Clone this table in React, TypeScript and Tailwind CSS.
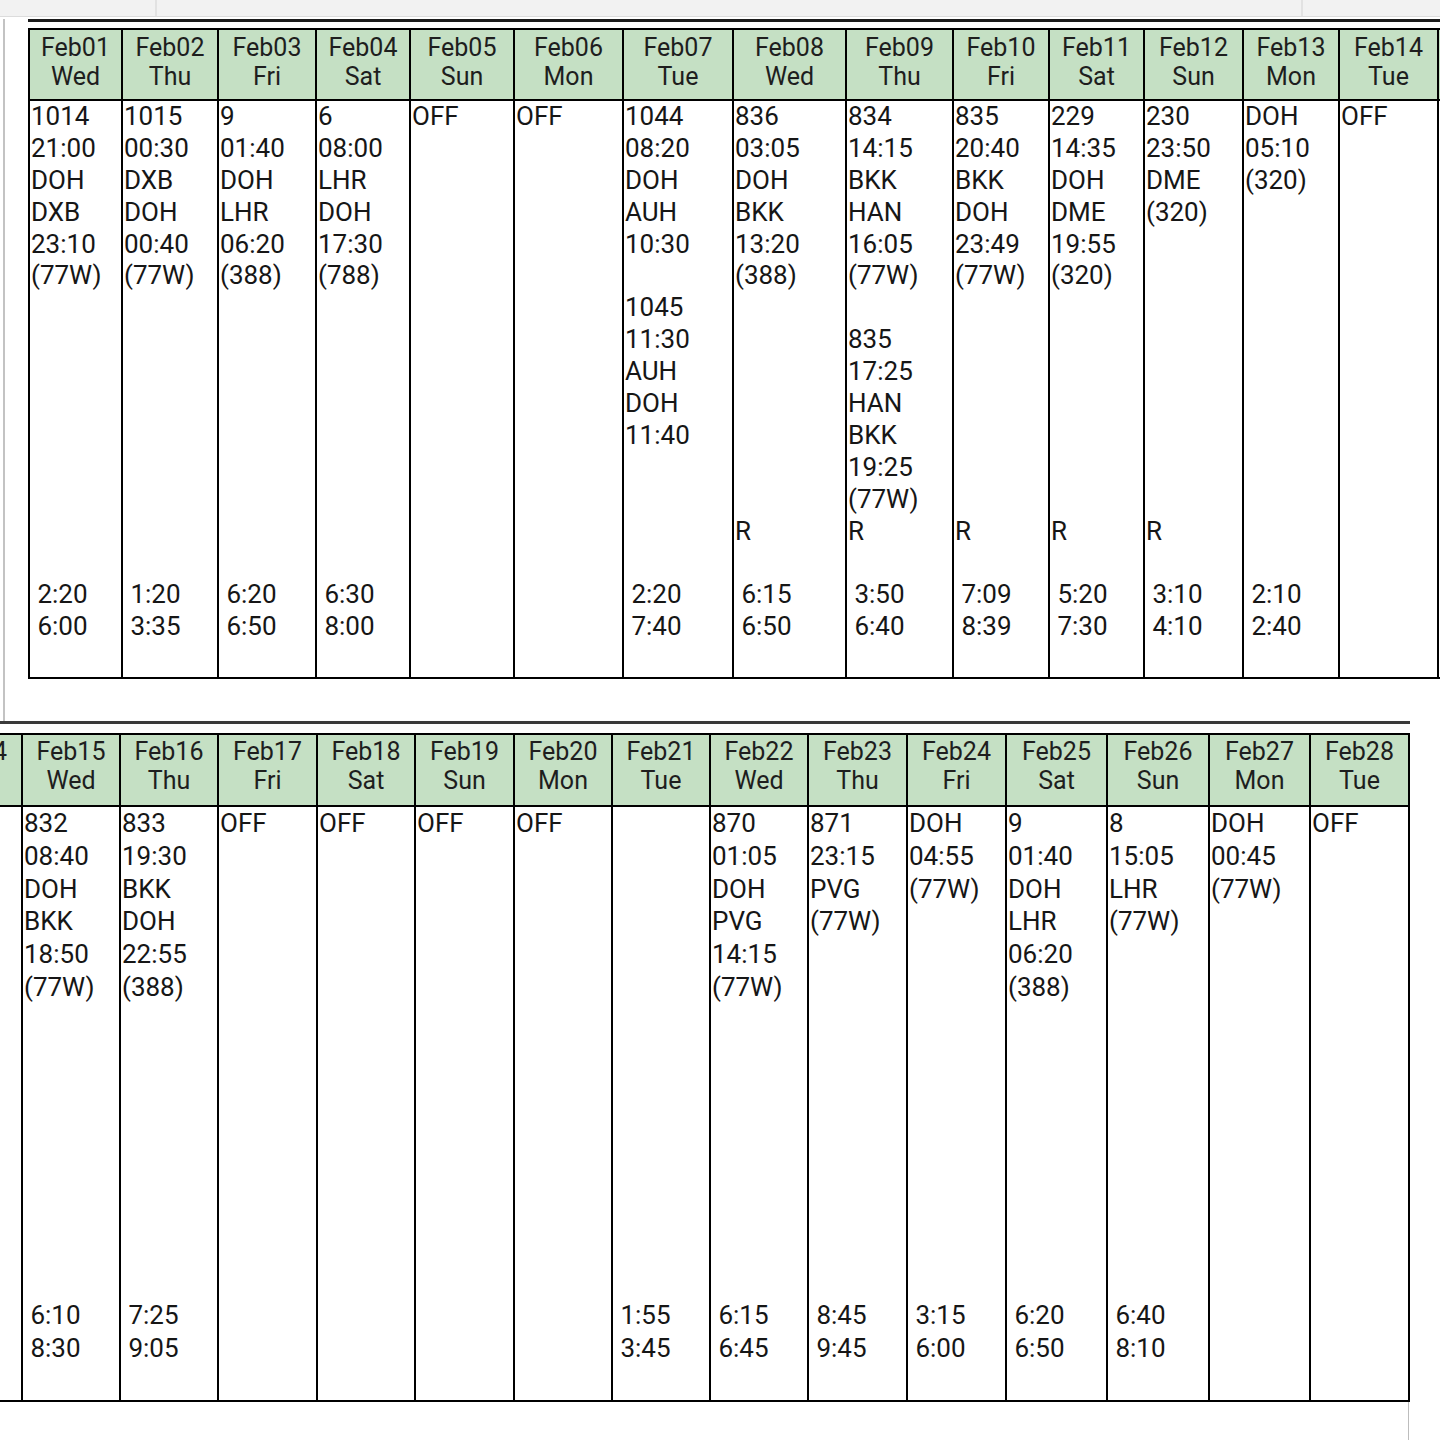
import React from 'react'

type Day = {
  d: string
  w: string
  lines: string[]
  r?: boolean
  dur?: [string, string]
  width: string
}

const topDays: Day[] = [
  { d: 'Feb01', w: 'Wed', width: 'w-[93px]', lines: ['1014', '21:00', 'DOH', 'DXB', '23:10', '(77W)'], dur: ['2:20', '6:00'] },
  { d: 'Feb02', w: 'Thu', width: 'w-[96px]', lines: ['1015', '00:30', 'DXB', 'DOH', '00:40', '(77W)'], dur: ['1:20', '3:35'] },
  { d: 'Feb03', w: 'Fri', width: 'w-[98px]', lines: ['9', '01:40', 'DOH', 'LHR', '06:20', '(388)'], dur: ['6:20', '6:50'] },
  { d: 'Feb04', w: 'Sat', width: 'w-[94px]', lines: ['6', '08:00', 'LHR', 'DOH', '17:30', '(788)'], dur: ['6:30', '8:00'] },
  { d: 'Feb05', w: 'Sun', width: 'w-[104px]', lines: ['OFF'] },
  { d: 'Feb06', w: 'Mon', width: 'w-[109px]', lines: ['OFF'] },
  {
    d: 'Feb07', w: 'Tue', width: 'w-[110px]',
    lines: ['1044', '08:20', 'DOH', 'AUH', '10:30', '', '1045', '11:30', 'AUH', 'DOH', '11:40'],
    dur: ['2:20', '7:40']
  },
  { d: 'Feb08', w: 'Wed', width: 'w-[113px]', lines: ['836', '03:05', 'DOH', 'BKK', '13:20', '(388)'], r: true, dur: ['6:15', '6:50'] },
  {
    d: 'Feb09', w: 'Thu', width: 'w-[107px]',
    lines: ['834', '14:15', 'BKK', 'HAN', '16:05', '(77W)', '', '835', '17:25', 'HAN', 'BKK', '19:25', '(77W)'],
    r: true, dur: ['3:50', '6:40']
  },
  { d: 'Feb10', w: 'Fri', width: 'w-[96px]', lines: ['835', '20:40', 'BKK', 'DOH', '23:49', '(77W)'], r: true, dur: ['7:09', '8:39'] },
  { d: 'Feb11', w: 'Sat', width: 'w-[95px]', lines: ['229', '14:35', 'DOH', 'DME', '19:55', '(320)'], r: true, dur: ['5:20', '7:30'] },
  { d: 'Feb12', w: 'Sun', width: 'w-[99px]', lines: ['230', '23:50', 'DME', '(320)'], r: true, dur: ['3:10', '4:10'] },
  { d: 'Feb13', w: 'Mon', width: 'w-[96px]', lines: ['DOH', '05:10', '(320)'], dur: ['2:10', '2:40'] },
  { d: 'Feb14', w: 'Tue', width: 'w-[99px]', lines: ['OFF'] },
  { d: 'Feb15', w: 'Wed', width: 'w-[100px]', lines: ['832', '08:40', 'DOH', 'BKK', '18:50', '(77W)'], dur: ['6:10', '8:30'] }
]

const bottomDays: Day[] = [
  { d: 'Feb14', w: 'Tue', width: 'w-[99px]', lines: ['OFF'] },
  { d: 'Feb15', w: 'Wed', width: 'w-[98px]', lines: ['832', '08:40', 'DOH', 'BKK', '18:50', '(77W)'], dur: ['6:10', '8:30'] },
  { d: 'Feb16', w: 'Thu', width: 'w-[98px]', lines: ['833', '19:30', 'BKK', 'DOH', '22:55', '(388)'], dur: ['7:25', '9:05'] },
  { d: 'Feb17', w: 'Fri', width: 'w-[99px]', lines: ['OFF'] },
  { d: 'Feb18', w: 'Sat', width: 'w-[98px]', lines: ['OFF'] },
  { d: 'Feb19', w: 'Sun', width: 'w-[99px]', lines: ['OFF'] },
  { d: 'Feb20', w: 'Mon', width: 'w-[98px]', lines: ['OFF'] },
  { d: 'Feb21', w: 'Tue', width: 'w-[98px]', lines: [], dur: ['1:55', '3:45'] },
  { d: 'Feb22', w: 'Wed', width: 'w-[98px]', lines: ['870', '01:05', 'DOH', 'PVG', '14:15', '(77W)'], dur: ['6:15', '6:45'] },
  { d: 'Feb23', w: 'Thu', width: 'w-[99px]', lines: ['871', '23:15', 'PVG', '(77W)'], dur: ['8:45', '9:45'] },
  { d: 'Feb24', w: 'Fri', width: 'w-[99px]', lines: ['DOH', '04:55', '(77W)'], dur: ['3:15', '6:00'] },
  { d: 'Feb25', w: 'Sat', width: 'w-[101px]', lines: ['9', '01:40', 'DOH', 'LHR', '06:20', '(388)'], dur: ['6:20', '6:50'] },
  { d: 'Feb26', w: 'Sun', width: 'w-[102px]', lines: ['8', '15:05', 'LHR', '(77W)'], dur: ['6:40', '8:10'] },
  { d: 'Feb27', w: 'Mon', width: 'w-[101px]', lines: ['DOH', '00:45', '(77W)'] },
  { d: 'Feb28', w: 'Tue', width: 'w-[99px]', lines: ['OFF'] }
]

// 17 text rows per cell: 13 for legs, one for R, a blank, then the two totals
const cellLines = (day: Day) => {
  const rows = [...day.lines]
  while (rows.length < 13) rows.push('')
  rows.push(day.r ? 'R' : '')
  rows.push('')
  rows.push(day.dur ? ' ' + day.dur[0] : '')
  rows.push(day.dur ? ' ' + day.dur[1] : '')
  return rows
}

type Sizing = {
  head: string
  body: string
  row: string
}

const topSize: Sizing = {
  head: 'h-[71px] pt-[3px]',
  body: 'h-[576px]',
  row: 'h-[31.9px] leading-[31.9px]'
}

const bottomSize: Sizing = {
  head: 'h-[72px] pt-[2px]',
  body: 'h-[593px]',
  row: 'h-[32.8px] leading-[32.8px]'
}

const Column = ({ day, size }: { day: Day; size: Sizing }) => (
  <div className={`${day.width} shrink-0 flex flex-col border-r-2 border-black`}>
    <div className={`${size.head} bg-[#c5e0c4] border-b-2 border-black text-center text-[25px] leading-[29px] text-[#1e1e1e]`}>
      <div>{day.d}</div>
      <div>{day.w}</div>
    </div>
    <div className={`${size.body} pl-[1px] text-[26px] text-[#161616]`}>
      {cellLines(day).map((l, i) => (
        <div key={i} className={`${size.row} whitespace-pre`}>
          {l}
        </div>
      ))}
    </div>
  </div>
)

const Schedule = ({ days, size }: { days: Day[]; size: Sizing }) => (
  <div className="flex w-max border-y-2 border-l-2 border-black bg-white">
    {days.map((day) => (
      <Column key={day.d} day={day} size={size} />
    ))}
  </div>
)

export default function App() {
  return (
    <div className="w-[1440px] h-[1440px] overflow-hidden bg-white font-['Roboto','Liberation_Sans',sans-serif] flex flex-col">
      {/* toolbar strip */}
      <div className="h-[17px] shrink-0 flex bg-[#f2f2f2] border-b border-[#dcdcdc]">
        <div className="w-[157px] border-r-2 border-[#e2e2e2]" />
        <div className="w-[1146px] border-r-2 border-[#e2e2e2]" />
        <div className="flex-1" />
      </div>

      {/* first half of the month */}
      <div className="h-[704px] shrink-0 pl-[3px] overflow-hidden">
        <div className="h-full border-l-2 border-[#c3c3c3] pl-[23px]">
          <div className="mt-[2px] border-t-[3px] border-[#1b1b1b] pt-[6px]">
            <Schedule days={topDays} size={topSize} />
          </div>
        </div>
      </div>

      {/* second half of the month */}
      <div className="flex-1 overflow-hidden">
        <div className="w-[1410px] border-t-[3px] border-[#3a3a3a] pt-[9px]">
          <div className="-ml-[78px]">
            <Schedule days={bottomDays} size={bottomSize} />
          </div>
        </div>
        <div className="w-[1409px] h-[60px] border-r border-[#bdbdbd]" />
      </div>
    </div>
  )
}
